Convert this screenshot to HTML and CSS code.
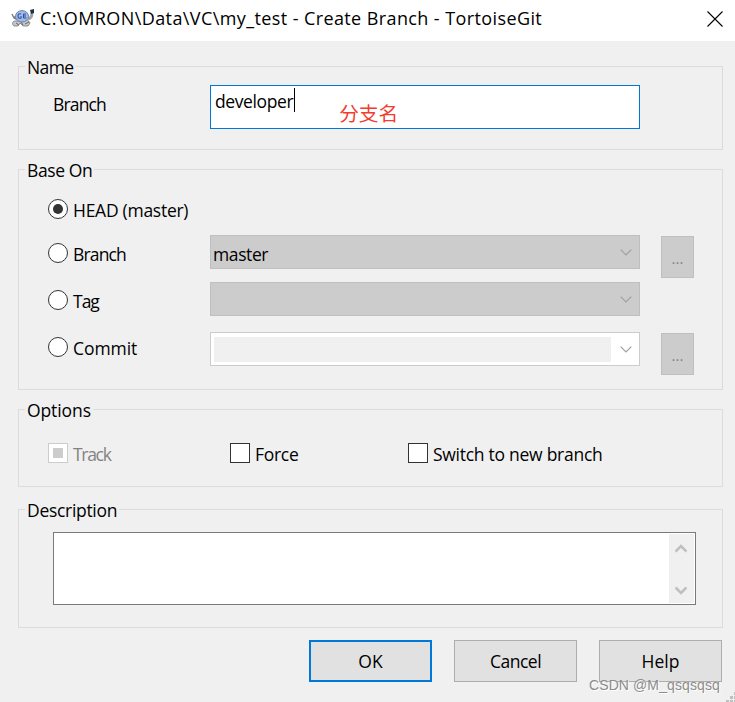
FILE: index.html
```
<!DOCTYPE html>
<html lang="en">
<head>
<meta charset="utf-8">
<title>Create Branch - TortoiseGit</title>
<link rel="stylesheet" href="styles.css">
</head>
<body>
<div class="dialog">
  <header class="titlebar">
    <svg class="logo" width="24" height="19" viewBox="0 0 24 19">
      <path d="M1 5l2 4 4 2M2 8l4 0" fill="none" stroke="#777f88" stroke-width="1.4"/>
      <path d="M4 12c-3 0-3 4-1 5h4l2-3 3 3h5l2-3c-1-3-4-3-6-2z" fill="#c4c6c9" stroke="#777" stroke-width=".8"/>
      <path d="M5 14l3 2M10 13l2 3M14 15l4-2" stroke="#666" stroke-width="1"/>
      <path d="M17 10q4-1 4-6" fill="none" stroke="#a0a3a8" stroke-width="3"/>
      <ellipse cx="11" cy="7.3" rx="6.5" ry="5.7" fill="#9dbcf0" stroke="#7182a6"/>
      <path d="M10 5q-3-1-3 2t3 2V7M12.500 5v4M12.500 7h2.500M15 5h-2.500M12.500 9h3" fill="none" stroke="#36528c" stroke-width="1.1"/>
      <path d="M19 1l4-1v4l-3 1z" fill="#16364d"/>
    </svg>
    <h1 class="title">C:\OMRON\Data\VC\my_test - Create Branch - TortoiseGit</h1>
    <svg class="close" width="16" height="16" viewBox="0 0 16 16"><path d="M.5.5l15 15M15.500.5l-15 15" stroke="#000" stroke-width="1.1"/></svg>
  </header>
  <main class="content">
    <section class="group name-group">
      <h2 class="legend l-name">Name</h2>
      <div class="name-row">
        <span class="name-label t-branch">Branch</span>
        <div class="input"><span class="t-dev">developer</span><i class="caret"></i><span class="note">分支名</span></div>
      </div>
    </section>
    <section class="group base-group">
      <h2 class="legend l-base">Base On</h2>
      <div class="row head-row"><div class="choice"><i class="radio on"></i><span class="t-head">HEAD (master)</span></div></div>
      <div class="row branch-row">
        <div class="choice"><i class="radio"></i><span class="t-branch">Branch</span></div>
        <div class="combo"><span class="t-master">master</span><svg class="chev" width="12" height="7" viewBox="0 0 12 7"><path d="M.7.7L6 6 11.300.7"/></svg></div>
        <div class="browse">...</div>
      </div>
      <div class="row tag-row">
        <div class="choice"><i class="radio"></i><span class="t-tag">Tag</span></div>
        <div class="combo"><svg class="chev" width="12" height="7" viewBox="0 0 12 7"><path d="M.7.7L6 6 11.300.7"/></svg></div>
      </div>
      <div class="row commit-row">
        <div class="choice"><i class="radio"></i><span class="t-commit">Commit</span></div>
        <div class="combo editable"><i class="edit"></i><svg class="chev" width="12" height="7" viewBox="0 0 12 7"><path d="M.7.7L6 6 11.300.7"/></svg></div>
        <div class="browse">...</div>
      </div>
    </section>
    <section class="group options-group">
      <h2 class="legend l-options">Options</h2>
      <div class="options">
        <div class="choice disabled"><i class="check"></i><span class="t-track">Track</span></div>
        <div class="choice"><i class="check"></i><span class="t-force">Force</span></div>
        <div class="choice"><i class="check"></i><span class="t-switch">Switch to new branch</span></div>
      </div>
    </section>
    <section class="group desc-group">
      <h2 class="legend l-desc">Description</h2>
      <div class="textarea">
        <div class="scrollbar">
          <svg width="12" height="9" viewBox="0 0 12 9"><path d="M.5 7.500L6 2l5.500 5.500"/></svg>
          <svg width="12" height="9" viewBox="0 0 12 9"><path d="M.5 1.500L6 7l5.500-5.500"/></svg>
        </div>
      </div>
    </section>
    <footer class="buttons">
      <div class="button primary"><span class="t-ok">OK</span></div>
      <div class="button"><span class="t-cancel">Cancel</span></div>
      <div class="button"><span class="t-help">Help</span></div>
    </footer>
  </main>
  <div class="watermark">CSDN @M_qsqsqsq</div>
  <svg class="grip" width="9" height="10" viewBox="0 0 9 10"><path d="M8 0h1v3H8zM4 4h3v3H4zM8 4h1v3H8zM0 8h3v2H0zM4 8h3v2H4zM8 8h1v2H8z" fill="#bfbfbf"/></svg>
</div>
</body>
</html>
```
FILE: styles.css
```
* { box-sizing: border-box; }
body { margin: 0; font: 17.5px/24px "Open Sans", "Noto Sans", "Noto Sans CJK SC", sans-serif; color: #000; }
h1, h2 { margin: 0; font: inherit; }
span, h1, h2 { white-space: nowrap; }
i { display: block; flex: none; }
svg { flex: none; }
.dialog { position: relative; width: 735px; height: 702px; background: #f0f0f0; overflow: hidden; }
.titlebar { display: flex; height: 41px; background: #fff; padding: 6px 12px 0 11px; }
.logo { margin: 3px 5px 0 0; }
.title { flex: 1; font-size: 18px; letter-spacing: 0.4px; }
.close { margin-top: 5px; }
.content { padding: 25px 12px 0 18px; }
.group { border: 1px solid #dcdcdc; margin-bottom: 19px; }
.legend { width: max-content; margin: -12px 0 0 6px; padding: 0 2px; background: #f0f0f0; }
.name-group { height: 84px; }
.base-group { height: 221px; }
.options-group { height: 78px; margin-bottom: 22px; }
.desc-group { height: 119px; margin-bottom: 12px; }
.name-row { display: flex; margin: 6px 0 0 34px; }
.name-label { width: 157px; padding-top: 7px; }
.input { display: flex; width: 430px; height: 44px; background: #fff; border: 1px solid #0078d7; padding: 3px 0 0 4px; }
.caret { width: 1px; height: 24px; margin-top: -1px; background: #000; }
.note { margin: 12px 0 0 44px; font: 19.7px/24px "Noto Sans CJK SC", sans-serif; color: #f43b30; }
.row { display: grid; grid-template-columns: 162px 430px 33px; column-gap: 0; margin-left: 29px; align-items: start; }
.choice { display: flex; gap: 5px; }
.head-row { height: 37px; margin-top: 16px; }
.branch-row { height: 47px; }
.tag-row { height: 50px; }
.branch-row .choice, .tag-row .choice { margin-top: 7px; }
.commit-row .choice { margin-top: 4px; }
.radio { width: 20px; height: 20px; margin-top: 1px; border: 1px solid #333; border-radius: 50%; background: #fff; }
.radio.on { padding: 4px; }
.radio.on::before { content: ""; display: block; width: 10px; height: 10px; border-radius: 50%; background: #333; }
.combo { display: flex; height: 34px; padding: 6px 7px 0 2px; background: #ccc; border: 1px solid #bfbfbf; }
.chev { margin: 7px 0 0 auto; fill: none; stroke: #a0a0a0; stroke-width: 1.2; }
.editable { background: #fff; border-color: #ccc; padding: 4px 7px 0 3px; }
.editable .chev { margin-top: 9px; }
.edit { width: 397px; height: 25px; background: #f0f0f0; }
.browse { width: 33px; height: 42px; margin: 1px 0 0 21px; padding-top: 9px; text-align: center; background: #ccc; border: 1px solid #bfbfbf; color: #838383; font-size: 15px; }
.options { display: grid; grid-template-columns: 182px 178px auto; margin: 20px 0 0 29px; }
.check { width: 20px; height: 20px; margin-top: 1px; border: 1px solid #333; background: #fff; }
.disabled { color: #838383; }
.disabled .check { border-color: #ccc; padding: 4px; }
.disabled .check::before { content: ""; display: block; width: 10px; height: 10px; background: #ccc; }
.textarea { display: flex; justify-content: flex-end; width: 643px; height: 73px; margin: 10px 0 0 34px; padding: 1px; border: 1px solid #7a7a7a; background: #fff; }
.scrollbar { display: flex; flex-direction: column; justify-content: space-between; align-items: center; width: 25px; padding: 10px 1px 8px 0; background: #f0f0f0; }
.scrollbar path { fill: none; stroke: #bfbfbf; stroke-width: 2.6; }
.buttons { display: flex; justify-content: flex-end; gap: 22px; padding-right: 1px; }
.button { width: 123px; height: 42px; display: flex; justify-content: center; padding-top: 8px; background: #e1e1e1; border: 1px solid #adadad; }
.primary { border: 2px solid #0078d7; padding-top: 7px; }
.watermark { position: absolute; left: 589px; top: 676px; font: 14px/18px "Liberation Sans", sans-serif; letter-spacing: 0.1px; color: #8c8c8c; text-shadow: 1px 1px 0 #fff; white-space: nowrap; }
.grip { position: absolute; right: 0; bottom: 0; }
.t-dev, .t-master { letter-spacing: -0.4px; }
.t-dev { margin-right: 1px; }
.t-head, .t-switch { letter-spacing: -0.27px; }
.t-branch { letter-spacing: -0.85px; }
.t-commit { letter-spacing: -0.05px; }
.t-tag { letter-spacing: -1px; }
.t-track { letter-spacing: -1.3px; }
.t-force { letter-spacing: -0.3px; }
.t-cancel { letter-spacing: -0.5px; }
.l-name { letter-spacing: -0.6px; }
.l-base { letter-spacing: -0.4px; }
.l-desc { letter-spacing: -0.3px; }
.l-options { letter-spacing: -0.1px; }
```
